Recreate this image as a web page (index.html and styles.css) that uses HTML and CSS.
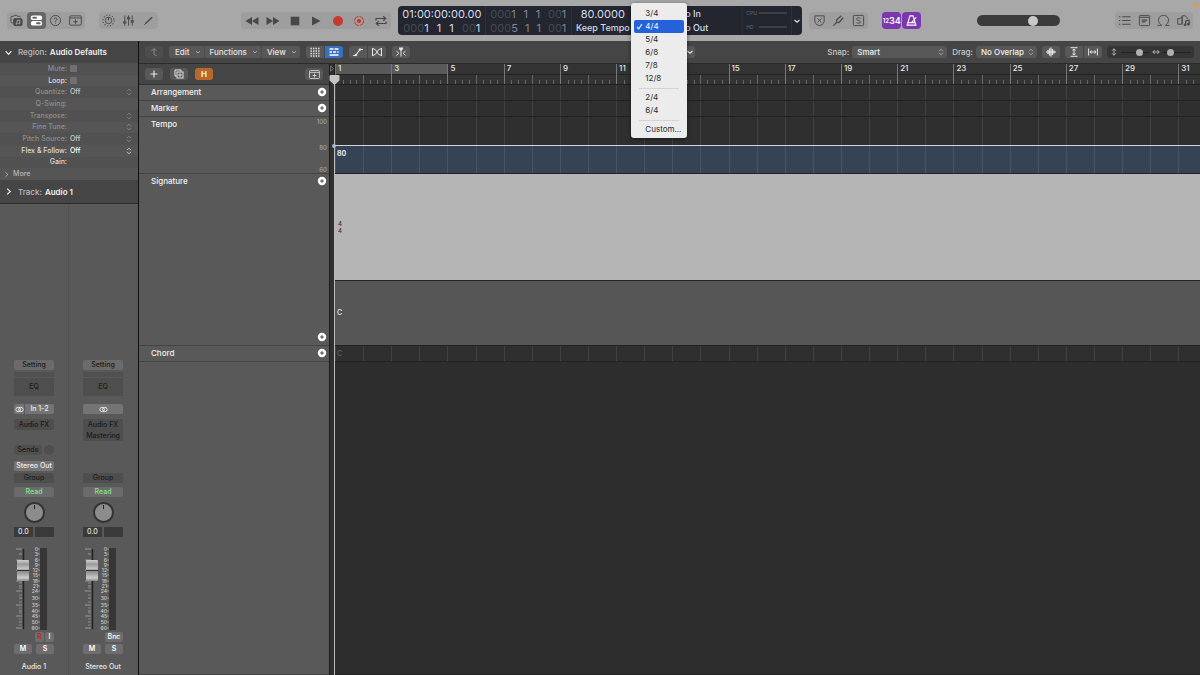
FILE: index.html
```html
<!DOCTYPE html>
<html lang="en">
<head>
    <meta charset="UTF-8">
    <meta name="viewport" content="width=device-width, initial-scale=1.0">
    <title>Tracks</title>
    <link rel="stylesheet" href="styles.css">
</head>
<body>
    <svg class="sprite" aria-hidden="true">
        <symbol id="i-library" viewBox="0 0 14 14"><path d="M3 9.500H2q-1 0-1-1V3.500q0-1 1-1h2l.7-1h2.600l.7 1h2q1 0 1 1"/><rect x="4" y="5" width="9" height="7.500" rx="1.200" fill="currentColor"/><path d="M7.500 10.500V7l3-.5v3.500" stroke="#a8a8a8"/><circle cx="7" cy="10.500" r=".6" stroke="#a8a8a8"/><circle cx="10" cy="10" r=".6" stroke="#a8a8a8"/></symbol>
        <symbol id="i-inspector" viewBox="0 0 14 14"><g stroke="none"><rect x="1" y="1.500" width="12" height="5" rx="2" fill="currentColor"/><rect x="1" y="7.500" width="12" height="5" rx="2" fill="currentColor"/><rect x="2.500" y="3" width="5" height="2" rx="1" fill="#666"/><rect x="6.500" y="9" width="5" height="2" rx="1" fill="#666"/></g></symbol>
        <symbol id="i-help" viewBox="0 0 14 14"><circle cx="7" cy="7" r="5.500"/><path d="M5.400 5.600Q5.500 4.200 7 4.200t1.600 1.400Q8.600 6.500 7 7.400v.8M7 9.200v1"/></symbol>
        <symbol id="i-addtray" viewBox="0 0 14 14"><rect x=".7" y="2" width="12.600" height="10" rx="1.200"/><path d="M1 4.300h12M7 5.800v5M4.500 8.300h5"/></symbol>
        <symbol id="i-dial" viewBox="0 0 14 14"><circle cx="7" cy="7" r="3.500"/><path d="M7 3.500V7" stroke-width="1.200"/><circle cx="7" cy="7" r="6" stroke-dasharray="1.200 1.940" stroke-width="1.200"/></symbol>
        <symbol id="i-mixer" viewBox="0 0 14 14"><path d="M3 1.500v11M7 1.500v11M11 1.500v11M1.800 8h2.400v2H1.800zM5.800 3.500h2.400v2H5.800zM9.800 7h2.400v2H9.800z"/></symbol>
        <symbol id="i-pencil" viewBox="0 0 14 14"><path d="M3.500 10.500l7.500-7" stroke-width="1.500"/><path d="M2.400 11.600l1-1"/></symbol>
        <symbol id="i-rewind" viewBox="0 0 14 14"><path d="M7 3v8L.5 7zM13.500 3v8L7 7z" fill="currentColor" stroke="none"/></symbol>
        <symbol id="i-forward" viewBox="0 0 14 14"><path d="M.5 3v8L7 7zM7 3v8l6.500-4z" fill="currentColor" stroke="none"/></symbol>
        <symbol id="i-stop" viewBox="0 0 14 14"><rect x="2.700" y="2.700" width="8.600" height="8.600" fill="currentColor" stroke="none"/></symbol>
        <symbol id="i-play" viewBox="0 0 14 14"><path d="M3 2.500v9L11.500 7z" fill="currentColor" stroke="none"/></symbol>
        <symbol id="i-record" viewBox="0 0 14 14"><circle cx="7" cy="7" r="5" fill="currentColor" stroke="none"/></symbol>
        <symbol id="i-capture" viewBox="0 0 14 14"><circle cx="7" cy="7" r="1.600" fill="currentColor"/><circle cx="7" cy="7" r="4.600" stroke-dasharray="6 1.220"/></symbol>
        <symbol id="i-cycle" viewBox="0 0 14 14"><path d="M2 6.500V4.500h9.500M9.200 2.200l2.500 2.300-2.500 2.300M12 7.500v2H2.500M4.800 7.200L2.300 9.500l2.500 2.300" stroke-width="1.200"/></symbol>
        <symbol id="i-replace" viewBox="0 0 14 14"><path d="M2 2h10v6.500Q10.500 12.500 7 12.500T2 8.500zM5 4.800L9 9M9 4.800L5 9"/></symbol>
        <symbol id="i-tuner" viewBox="0 0 14 14"><path d="M1.500 12.500l4-4M5.500 8.500Q4.200 7 5.500 5.800L10 1.800M5.500 8.500Q7 9.800 8.200 8.500L12 4" stroke-width="1.400"/></symbol>
        <symbol id="i-solo" viewBox="0 0 14 14"><rect x="1.500" y="1.500" width="11" height="11" rx="1"/><path d="M9 5Q8.700 4 7 4T5 5.500Q5 6.600 7 7t2 1.500Q9 10 7 10T5 9"/></symbol>
        <symbol id="i-metro" viewBox="0 0 14 14"><path d="M5.300 2h3.400l3 10H2.300zM3 9.300h8M7 9.300L12.200 3.500" stroke-width="1.200"/></symbol>
        <symbol id="i-list" viewBox="0 0 14 14"><path d="M4.500 3h9M4.500 7h9M4.500 11h9M1 3h1.500M1 7h1.500M1 11h1.500" stroke-width="1.200"/></symbol>
        <symbol id="i-notepad" viewBox="0 0 14 14"><rect x="1.500" y="1.500" width="11" height="11" rx="1"/><path d="M1.500 3.500h11M4 6.500h6M4 8.500h4" stroke-width="1.300"/></symbol>
        <symbol id="i-loops" viewBox="0 0 14 14"><path d="M.5 12.300h4.500Q1.500 10 1.500 6.700 2 1.500 7 1.500t5.500 5.200Q12.500 10 9 12.300h4.500"/></symbol>
        <symbol id="i-media" viewBox="0 0 14 14"><path d="M.8 11V5h2.500l1-1.500h1.200V11zM5.500 11V2h3.500l2 2v1.500"/><path d="M9.300 11.500V7.500l3.700-.8v4" stroke-width="1.300"/><circle cx="8.600" cy="11.700" r="1" fill="currentColor"/><circle cx="12.300" cy="11" r="1" fill="currentColor"/></symbol>
        <symbol id="i-up" viewBox="0 0 10 10"><path d="M5 1.500v5q0 2 2.500 2M2.500 4L5 1.500 7.500 4"/></symbol>
        <symbol id="i-down" viewBox="0 0 10 10"><path d="M2.500 4L5 6.200 7.500 4" stroke-width="1.200"/></symbol>
        <symbol id="i-right" viewBox="0 0 10 10"><path d="M3.500 1.800L7 5 3.500 8.200" stroke-width="1.300"/></symbol>
        <symbol id="i-step" viewBox="0 0 10 10"><path d="M2.500 4L5 1.500 7.500 4M2.500 6L5 8.500 7.500 6"/></symbol>
        <symbol id="i-grid" viewBox="0 0 10 10"><path d="M.5 1.500h9M.5 4h9M.5 6.500h9M.5 9h9" stroke-width="1.300" stroke-dasharray="1.400 1.130"/></symbol>
        <symbol id="i-regions" viewBox="0 0 10 10"><path d="M.5 2h4M5.500 2h4M.5 8h9" stroke-width="1.700"/><path d="M.5 5H3M4 5h3M8 5h1.500" stroke-width="1.700"/></symbol>
        <symbol id="i-auto" viewBox="0 0 10 10"><path d="M0 8.500h2.500l4.500-6h3" stroke-width="1.200"/><circle cx="3" cy="8" r=".8" fill="currentColor"/><circle cx="7" cy="2.500" r=".8" fill="currentColor"/></symbol>
        <symbol id="i-flex" viewBox="0 0 10 10"><path d="M.5 1v8M9.500 1v8M.5 1.500Q4 2 5 5t4.500 3.500M.5 8.500Q4 8 5 5t4.500-3.500"/></symbol>
        <symbol id="i-catch" viewBox="0 0 10 10"><path d="M3 .5h4v1.800L5 4 3 2.300z" fill="currentColor" stroke="none"/><path d="M5 3v6.500M.5 4l2.300 2.200L.5 8.500M9.500 4L7.200 6.200l2.300 2.300"/></symbol>
        <symbol id="i-plus" viewBox="0 0 10 10"><path d="M5 1.500v7M1.500 5h7" stroke-width="1.200"/></symbol>
        <symbol id="i-dup" viewBox="0 0 10 10"><path d="M7 2.500V1H1v6h1.500"/><rect x="3" y="3" width="6" height="6"/><path d="M6 4.300v3.400M4.300 6h3.400"/></symbol>
        <symbol id="i-wave" viewBox="0 0 10 10"><path d="M0 5h10M2 3v4M3.500 1.500v7M5 .5v9M6.500 2v6M8 3.500v3" stroke-width="1.200"/></symbol>
        <symbol id="i-vfit" viewBox="0 0 10 10"><path d="M1.500.7h7M1.500 9.300h7M5 2v6M3.300 3.500L5 2l1.700 1.500M3.300 6.500L5 8l1.700-1.500"/></symbol>
        <symbol id="i-hfit" viewBox="0 0 10 10"><path d="M.6 1.500v7M9.400 1.500v7M2 5h6M3.500 3.300L2 5l1.500 1.700M6.500 3.300L8 5 6.500 6.700"/></symbol>
        <symbol id="i-ud" viewBox="0 0 10 10"><path d="M5 1v8M2.500 3.500L5 1l2.500 2.500M2.500 6.500L5 9l2.500-2.500"/></symbol>
        <symbol id="i-lr" viewBox="0 0 10 10"><path d="M1 5h8M3.500 2.500L1 5l2.500 2.500M6.500 2.500L9 5 6.500 7.500"/></symbol>
        <symbol id="i-add" viewBox="0 0 10 10"><circle cx="5" cy="5" r="4.200" fill="#fff" stroke="none"/><path d="M5 3.200v3.600M3.200 5h3.600" stroke="#444"/></symbol>
        <symbol id="i-stereo" viewBox="0 0 10 10"><circle cx="3.500" cy="5" r="2.500"/><circle cx="6.500" cy="5" r="2.500"/></symbol>
        <symbol id="i-check" viewBox="0 0 10 10"><path d="M1.500 5.500L4 8.500l4.500-7" stroke-width="1.500"/></symbol>
    </svg>

    <header class="control-bar">
        <div class="bar-left">
            <div class="group views">
                <button aria-label="Library"><svg><use href="#i-library"/></svg></button>
                <button class="pressed" aria-label="Inspector"><svg><use href="#i-inspector"/></svg></button>
                <button aria-label="Quick Help"><svg><use href="#i-help"/></svg></button>
                <button aria-label="Toolbar"><svg><use href="#i-addtray"/></svg></button>
            </div>
            <div class="group editors">
                <button aria-label="Smart Controls"><svg><use href="#i-dial"/></svg></button>
                <button aria-label="Mixer"><svg><use href="#i-mixer"/></svg></button>
                <button aria-label="Editors"><svg><use href="#i-pencil"/></svg></button>
            </div>
        </div>
        <div class="bar-center">
            <div class="group transport">
                <button aria-label="Rewind"><svg><use href="#i-rewind"/></svg></button>
                <button aria-label="Forward"><svg><use href="#i-forward"/></svg></button>
                <button aria-label="Stop"><svg><use href="#i-stop"/></svg></button>
                <button aria-label="Play"><svg><use href="#i-play"/></svg></button>
                <button class="red" aria-label="Record"><svg><use href="#i-record"/></svg></button>
                <button class="red" aria-label="Capture"><svg><use href="#i-capture"/></svg></button>
                <button aria-label="Cycle"><svg><use href="#i-cycle"/></svg></button>
            </div>
            <div class="lcd">
                <div class="lcd-cell lcd-time">
                    <div class="big">01:00:00:00.00</div>
                    <div class="beats"><span><i>000</i>1</span><span>1</span><span>1</span><span><i>00</i>1</span></div>
                </div>
                <div class="lcd-cell lcd-locators">
                    <div class="beats"><span><i>000</i>1</span><span>1</span><span>1</span><span><i>00</i>1</span></div>
                    <div class="beats"><span><i>000</i>5</span><span>1</span><span>1</span><span><i>00</i>1</span></div>
                </div>
                <div class="lcd-cell lcd-tempo">
                    <div class="big">80.0000</div>
                    <div>Keep Tempo</div>
                </div>
                <div class="lcd-cell lcd-sig">
                    <ul class="menu" role="menu">
                        <li><button role="menuitem">3/4</button></li>
                        <li><button role="menuitem" class="selected"><svg><use href="#i-check"/></svg>4/4</button></li>
                        <li><button role="menuitem">5/4</button></li>
                        <li><button role="menuitem">6/8</button></li>
                        <li><button role="menuitem">7/8</button></li>
                        <li><button role="menuitem">12/8</button></li>
                        <li class="sep"></li>
                        <li><button role="menuitem">2/4</button></li>
                        <li><button role="menuitem">6/4</button></li>
                        <li class="sep"></li>
                        <li><button role="menuitem">Custom...</button></li>
                    </ul>
                </div>
                <div class="lcd-cell lcd-midi">
                    <div>No In</div>
                    <div>No Out</div>
                </div>
                <div class="lcd-cell lcd-load">
                    <div>CPU<span></span></div>
                    <div>HD<span></span></div>
                </div>
                <button class="lcd-more" aria-label="Display mode"><svg><use href="#i-down"/></svg></button>
            </div>
            <div class="group modes">
                <button aria-label="Replace"><svg><use href="#i-replace"/></svg></button>
                <button aria-label="Tuner"><svg><use href="#i-tuner"/></svg></button>
                <button aria-label="Solo"><svg><use href="#i-solo"/></svg></button>
            </div>
            <div class="clicks">
                <button><small>12</small>34</button>
                <button aria-label="Metronome"><svg><use href="#i-metro"/></svg></button>
            </div>
        </div>
        <input type="range" class="volume" aria-label="Master volume" value="70">
        <div class="group views">
            <button aria-label="List Editors"><svg><use href="#i-list"/></svg></button>
            <button aria-label="Note Pads"><svg><use href="#i-notepad"/></svg></button>
            <button aria-label="Loop Browser"><svg><use href="#i-loops"/></svg></button>
            <button aria-label="Media"><svg><use href="#i-media"/></svg></button>
        </div>
        <span class="mic-dot"></span>
    </header>

    <div class="workspace">
        <aside class="inspector">
            <h2 class="region-title"><svg><use href="#i-right"/></svg>Region: <b>Audio Defaults</b></h2>
            <div class="params">
                <div class="param"><label for="mute">Mute:</label><input type="checkbox" id="mute"></div>
                <div class="param on"><label for="loop">Loop:</label><input type="checkbox" id="loop"></div>
                <div class="param"><label for="quantize">Quantize:</label><select id="quantize"><option>Off</option></select><svg><use href="#i-step"/></svg></div>
                <div class="param"><label>Q-Swing:</label></div>
                <div class="param"><label for="transpose">Transpose:</label><select id="transpose"><option></option></select><svg><use href="#i-step"/></svg></div>
                <div class="param"><label for="fine">Fine Tune:</label><select id="fine"><option></option></select><svg><use href="#i-step"/></svg></div>
                <div class="param"><label for="pitch">Pitch Source:</label><select id="pitch"><option>Off</option></select><svg><use href="#i-step"/></svg></div>
                <div class="param on"><label for="flex">Flex &amp; Follow:</label><select id="flex"><option>Off</option></select><svg><use href="#i-step"/></svg></div>
                <div class="param on"><label>Gain:</label></div>
                <button class="param more"><svg><use href="#i-right"/></svg>More</button>
            </div>
            <h2 class="track-title"><svg><use href="#i-right"/></svg>Track: <b>Audio 1</b></h2>
            <div class="strips">
                <section class="strip">
                    <button class="slot light">Setting</button>
                    <div class="eq"><span></span><button>EQ</button></div>
                    <div class="slot bright split"><button aria-label="Stereo"><svg><use href="#i-stereo"/></svg></button><button>In 1-2</button></div>
                    <div class="fx"><button>Audio FX</button></div>
                    <div class="sends"><button>Sends</button><span></span></div>
                    <button class="slot bright">Stereo Out</button>
                    <button class="slot dark">Group</button>
                    <button class="slot light read">Read</button>
                    <div class="knob"></div>
                    <div class="values"><span>0.0</span><span></span></div>
                    <div class="fader"><input type="range" aria-label="Audio 1 volume" value="80"></div>
                    <div class="arm"><button class="rec">R</button><button>I</button></div>
                    <div class="ms"><button>M</button><button>S</button></div>
                    <div class="name">Audio 1</div>
                </section>
                <section class="strip">
                    <button class="slot light">Setting</button>
                    <div class="eq"><span></span><button>EQ</button></div>
                    <button class="slot bright" aria-label="Stereo"><svg><use href="#i-stereo"/></svg></button>
                    <div class="fx"><button>Audio FX</button><button>Mastering</button></div>
                    <div></div>
                    <div></div>
                    <button class="slot dark">Group</button>
                    <button class="slot light read">Read</button>
                    <div class="knob"></div>
                    <div class="values"><span>0.0</span><span></span></div>
                    <div class="fader"><input type="range" aria-label="Stereo Out volume" value="80"></div>
                    <div class="arm"><button>Bnc</button></div>
                    <div class="ms"><button>M</button><button>S</button></div>
                    <div class="name">Stereo Out</div>
                </section>
            </div>
        </aside>

        <main class="tracks">
            <div class="menu-bar">
                <button class="btn dim" aria-label="Up"><svg><use href="#i-up"/></svg></button>
                <div class="btns text">
                    <button>Edit<svg><use href="#i-down"/></svg></button>
                    <button>Functions<svg><use href="#i-down"/></svg></button>
                    <button>View<svg><use href="#i-down"/></svg></button>
                </div>
                <div class="btns">
                    <button aria-label="Grid"><svg><use href="#i-grid"/></svg></button>
                    <button class="blue" aria-label="Regions"><svg><use href="#i-regions"/></svg></button>
                </div>
                <div class="btns">
                    <button aria-label="Automation"><svg><use href="#i-auto"/></svg></button>
                    <button aria-label="Flex"><svg><use href="#i-flex"/></svg></button>
                </div>
                <button class="btn" aria-label="Catch"><svg><use href="#i-catch"/></svg></button>
                <button class="btn tool" aria-label="Tool"><svg><use href="#i-down"/></svg></button>
                <div class="snap">
                    <label for="snap">Snap:</label>
                    <div class="pick"><select id="snap"><option>Smart</option></select><svg><use href="#i-step"/></svg></div>
                    <label for="drag">Drag:</label>
                    <div class="pick short"><select id="drag"><option>No Overlap</option></select><svg><use href="#i-step"/></svg></div>
                    <button class="btn" aria-label="Waveform zoom"><svg><use href="#i-wave"/></svg></button>
                    <div class="btns">
                        <button aria-label="Fit vertically"><svg><use href="#i-vfit"/></svg></button>
                        <button aria-label="Fit horizontally"><svg><use href="#i-hfit"/></svg></button>
                    </div>
                    <div class="zooms">
                        <svg><use href="#i-ud"/></svg><input type="range" aria-label="Vertical zoom" value="70">
                        <svg><use href="#i-lr"/></svg><input type="range" aria-label="Horizontal zoom" value="18">
                    </div>
                </div>
            </div>

            <div class="arrange">
                <div class="row ruler-row">
                    <div class="head tools">
                        <button class="btn" aria-label="Add track"><svg><use href="#i-plus"/></svg></button>
                        <button class="btn" aria-label="Duplicate track"><svg><use href="#i-dup"/></svg></button>
                        <button class="btn orange">H</button>
                        <button class="btn last" aria-label="Global tracks"><svg><use href="#i-addtray"/></svg></button>
                    </div>
                    <div class="gutter"><svg viewBox="0 0 5 10"><path d="M.5 1.500L4 5 .5 8.500z"/></svg></div>
                    <div class="ruler" id="ruler"></div>
                </div>
                <div class="row">
                    <div class="head">Arrangement<button class="add" aria-label="Add arrangement"><svg><use href="#i-add"/></svg></button></div>
                    <div class="gutter"></div>
                    <div class="lane grid"></div>
                </div>
                <div class="row">
                    <div class="head">Marker<button class="add" aria-label="Add marker"><svg><use href="#i-add"/></svg></button></div>
                    <div class="gutter"></div>
                    <div class="lane grid"></div>
                </div>
                <div class="row tempo">
                    <div class="head">Tempo<div class="scale"><span>100</span><span>80</span><span>60</span></div></div>
                    <div class="gutter"></div>
                    <div class="lane grid"><div class="tempo-region">80</div></div>
                </div>
                <div class="row signature">
                    <div class="head">Signature
                        <div class="adds">
                            <button class="add" aria-label="Add time signature"><svg><use href="#i-add"/></svg></button>
                            <button class="add" aria-label="Add key signature"><svg><use href="#i-add"/></svg></button>
                        </div>
                    </div>
                    <div class="gutter"></div>
                    <div class="lane">
                        <div class="time-sig"><span>4</span><span>4</span></div>
                        <div class="key-sig">C</div>
                    </div>
                </div>
                <div class="row">
                    <div class="head">Chord<button class="add" aria-label="Add chord"><svg><use href="#i-add"/></svg></button></div>
                    <div class="gutter"></div>
                    <div class="lane grid"><span class="chord">C</span></div>
                </div>
                <div class="row rest">
                    <div class="head"></div>
                    <div class="gutter"></div>
                    <div class="lane"></div>
                </div>
                <div class="playhead"><svg viewBox="0 0 10 10"><path d="M0 1q0-1 1-1h8q1 0 1 1v4.500L5 10 0 5.500z" fill="#c4c4c4" stroke="none"/></svg><span class="node"></span></div>
            </div>
        </main>
    </div>

    <script>
        const BARS = 31;

        // Ruler: one cell per bar, number on the odd ones
        const ruler = document.getElementById('ruler');
        for (let bar = 1; bar <= BARS; bar++) {
            const cell = document.createElement('div');
            cell.className = 'bar' + (bar % 2 ? ' odd' : '') + (bar < 5 ? ' cycle' : '');
            cell.innerHTML = `
                <div class="num">${bar % 2 ? bar : ''}</div>
                <div class="ticks"><i></i><i></i><i></i><i></i></div>
            `;
            ruler.appendChild(cell);
        }

        // Bar lines behind the global tracks
        document.querySelectorAll('.lane.grid').forEach(lane => {
            const lines = document.createElement('div');
            lines.className = 'lines';
            lines.innerHTML = '<i></i>'.repeat(BARS);
            lane.appendChild(lines);
        });

        // Fader scale and level meter
        const marks = [[0, 2], [3, 7], [6, 13], [9, 18], [12, 23], [15, 28], [18, 34], [21, 39],
            [24, 44], [30, 51], [35, 58], [40, 64], [45, 69], [50, 75], [60, 81]];
        document.querySelectorAll('.fader').forEach(fader => {
            let svg = '<svg viewBox="0 0 40 84"><path d="M9.500 2v80" stroke="#222" stroke-width="1.500"/>';
            marks.forEach(([db, y], i) => {
                svg += `<path d="M${i % 2 ? 5 : 2} ${y}h${i % 2 ? 3 : 6}M24 ${y}h2" stroke="#999"/>`;
                if (i > 6) svg += `<path d="M5 ${y - 3}h3" stroke="#888"/>`;
                svg += `<text x="24" y="${y + 1.5}" text-anchor="end">${db}</text>`;
            });
            svg += '<rect x="26" y="1" width="7" height="82" fill="#363636" stroke="none"/></svg>';
            fader.insertAdjacentHTML('afterbegin', svg);
        });
    </script>
</body>
</html>
```
FILE: styles.css
```css
* {
    box-sizing: border-box;
}
body {
    margin: 0;
    height: 100vh;
    display: flex;
    flex-direction: column;
    overflow: hidden;
    background: #2d2d2d;
    color: #e6e6e6;
    font: 500 8px/12px Inter, "Liberation Sans", sans-serif;
}
button, select, input {
    font: inherit;
    color: inherit;
    margin: 0;
    padding: 0;
    border: 0;
    background: none;
    appearance: none;
    outline: none;
}
button {
    display: flex;
    align-items: center;
    justify-content: center;
    white-space: nowrap;
}
svg {
    width: 10px;
    height: 10px;
    fill: none;
    stroke: currentColor;
    flex: none;
}
.sprite {
    display: none;
}
i {
    font-style: normal;
}

/* Control bar */
.control-bar {
    position: relative;
    height: 41px;
    flex: none;
    padding: 0 7px;
    display: flex;
    align-items: center;
    justify-content: space-between;
    background: #a8a8a8;
    color: #484848;
}
.bar-left {
    display: flex;
    gap: 14px;
}
.bar-center {
    display: flex;
    align-items: center;
    gap: 7px;
    margin-left: 28px;
}
.group {
    display: flex;
    height: 17px;
    border-radius: 4px;
    background: #9e9e9e;
}
.group button {
    flex: 1;
    border-radius: 4px;
}
.group svg, .clicks svg {
    width: 13px;
    height: 13px;
}
.views {
    width: 78px;
}
.editors, .modes {
    width: 59px;
}
.transport {
    width: 150px;
}
.transport svg {
    width: 14px;
    height: 14px;
}
.group .pressed {
    background: #666;
    color: #fff;
}
.red {
    color: #c53a2f;
}
.clicks {
    display: flex;
    gap: 1px;
    margin-left: 7px;
}
.clicks button {
    width: 19px;
    height: 17px;
    border-radius: 4px;
    background: #7b37ad;
    color: #fff;
    font-size: 9px;
    font-weight: 600;
}
.clicks small {
    font-size: 6px;
}
.volume {
    width: 83px;
    height: 11px;
    border-radius: 6px;
    background: #3b3b3b;
}
.volume::-webkit-slider-thumb {
    appearance: none;
    width: 10px;
    height: 10px;
    border-radius: 50%;
    background: #c9c9c9;
}
.mic-dot {
    position: absolute;
    right: 3px;
    top: 3px;
    width: 4px;
    height: 4px;
    border-radius: 50%;
    background: #e79a3a;
}

/* LCD */
.lcd {
    position: relative;
    display: flex;
    width: 404px;
    height: 29px;
    border-radius: 4px;
    background: #23252f;
    color: #d3dcec;
    font-size: 9px;
    line-height: 14px;
}
.lcd-cell {
    display: flex;
    flex-direction: column;
    flex: none;
    border-right: 1px solid #2d303a;
    white-space: nowrap;
}
.big, .beats {
    font-size: 11px;
    font-weight: 400;
}
.beats {
    display: flex;
    justify-content: space-between;
}
.beats i {
    color: #454954;
}
.lcd-time {
    width: 88px;
    padding: 1px 5px 0 4px;
}
.lcd-time .beats {
    padding-left: 1px;
}
.lcd-locators {
    width: 86px;
    padding: 1px 5px 0 4px;
}
.lcd-locators .beats {
    color: #818694;
}
.lcd-tempo {
    width: 61px;
    padding-top: 1px;
    align-items: center;
    border: 0;
}
.lcd-sig {
    width: 42px;
    border: 0;
}
.lcd-midi {
    width: 68px;
    padding: 1px 0 0 3px;
}
.lcd-load {
    width: 49px;
    padding: 0 4px 0 3px;
    color: #5a5e6a;
    font-size: 5px;
}
.lcd-load div {
    display: flex;
    align-items: center;
    justify-content: space-between;
}
.lcd-load span {
    width: 28px;
    height: 2px;
    background: #3a3d48;
}
.lcd-more {
    flex: 1;
}
.menu {
    position: absolute;
    z-index: 5;
    left: 233px;
    top: -3px;
    width: 56px;
    margin: 0;
    padding: 4px 3px 2px;
    list-style: none;
    border-radius: 3px;
    background: #ececec;
    box-shadow: 0 1px 4px rgba(0, 0, 0, .5);
    color: #2b2b2b;
    font-size: 8px;
    font-weight: 400;
    line-height: 13px;
}
.menu button {
    position: relative;
    width: 100%;
    height: 13px;
    padding-left: 11px;
    justify-content: flex-start;
    border-radius: 2px;
}
.menu svg {
    position: absolute;
    left: 2px;
    width: 7px;
    height: 7px;
}
.menu .selected {
    background: #2561d9;
    color: #fff;
}
.menu .sep {
    height: 6px;
    margin: 0 5px;
    background: linear-gradient(#d4d4d4, #d4d4d4) center / 100% 1px no-repeat;
}

/* Inspector */
.workspace {
    flex: 1;
    display: flex;
    min-height: 0;
}
.inspector {
    width: 139px;
    flex: none;
    display: flex;
    flex-direction: column;
    border-right: 1px solid #111;
    background: #595959;
}
.inspector h2 {
    display: flex;
    align-items: center;
    gap: 3px;
    height: 22px;
    margin: 0;
    padding-left: 4px;
    background: #454545;
    color: #bdbdbd;
    font-size: 8px;
    font-weight: 500;
    flex: none;
}
.inspector h2 b {
    color: #f2f2f2;
    font-weight: 600;
}
.inspector h2 svg {
    width: 9px;
    height: 9px;
    margin-right: 2px;
    color: #eee;
}
.region-title svg {
    transform: rotate(90deg);
}
.inspector .track-title {
    height: 24px;
    border-bottom: 1px solid #2c2c2c;
}
.params {
    display: flex;
    flex-direction: column;
    height: 117px;
    font-size: 7px;
    line-height: 10px;
}
.param {
    flex: 1;
    min-height: 0;
    display: flex;
    align-items: center;
    gap: 3px;
    padding-right: 5px;
    background: #515151;
    color: #8e8e8e;
}
.param:nth-child(even) {
    background: #555;
}
.param label {
    width: 67px;
    text-align: right;
}
.param.on {
    color: #ddd;
}
.param select {
    flex: 1;
    height: 10px;
    color: #ccc;
}
.param.on select {
    color: #fff;
}
.param input {
    width: 7px;
    height: 7px;
    border-radius: 1px;
    background: #707070;
}
.param svg {
    width: 8px;
    height: 8px;
}
.more {
    justify-content: flex-start;
    padding-left: 3px;
    color: #b5b5b5;
}
.more svg {
    width: 7px;
    height: 7px;
}

/* Channel strips */
.strips {
    flex: 1;
    display: flex;
    align-items: stretch;
}
.strip {
    width: 69px;
    padding: 0 14px;
    display: grid;
    align-content: end;
    align-items: start;
    grid-template-columns: 40px;
    grid-template-rows: 12px 32px 15px 26px 16px 12px 14px 15px 25px 20px 85px 12px 16px 15px;
    font-size: 7px;
    line-height: 10px;
}
.strip:first-child {
    border-right: 1px solid #505050;
}
.slot, .fx, .values, .ms, .arm {
    height: 10px;
}
.slot {
    width: 100%;
    border-radius: 2px;
}
.light, .bright {
    background: #6b6b6b;
    color: #1c1c1c;
}
.bright {
    background: #747474;
    color: #eee;
}
.slot.dark {
    background: #4e4e4e;
    color: #1c1c1c;
}
.slot.read {
    color: #8ae08e;
}
.slot svg {
    width: 9px;
    height: 9px;
}
.split {
    display: flex;
}
.split button:first-child {
    width: 11px;
    border-right: 1px solid #5b5b5b;
}
.split button:last-child {
    flex: 1;
}
.eq {
    width: 100%;
    color: #1c1c1c;
}
.eq span {
    display: block;
    height: 5px;
    margin-bottom: 1px;
    background: #505050;
}
.eq button {
    width: 100%;
    height: 18px;
    background: #4e4e4e;
}
.fx {
    height: auto;
    border-radius: 2px;
    background: #4e4e4e;
    color: #1a1a1a;
}
.fx button {
    width: 100%;
    height: 11px;
}
.sends {
    display: flex;
    justify-content: space-between;
    color: #1a1a1a;
}
.sends button, .sends span {
    height: 10px;
    border-radius: 3px;
    background: #505050;
}
.sends button {
    width: 28px;
}
.sends span {
    width: 10px;
    border-radius: 50%;
    background: #4e4e4e;
}
.knob {
    justify-self: center;
    width: 21px;
    height: 21px;
    border: 2px solid #333;
    border-radius: 50%;
    background: linear-gradient(#222, #222) center 1px / 1px 4px no-repeat, #8c8c8c;
}
.values {
    display: flex;
    gap: 2px;
    text-align: center;
}
.values span {
    flex: 1;
    height: 10px;
    background: #3a3a3a;
}
.fader {
    position: relative;
    height: 84px;
}
.fader svg {
    display: block;
    width: 40px;
    height: 84px;
}
.fader text {
    font-size: 5px;
    fill: #ccc;
    stroke: none;
}
.fader input {
    position: absolute;
    left: 3px;
    top: 1px;
    width: 12px;
    height: 82px;
    writing-mode: vertical-lr;
    direction: rtl;
}
.fader input::-webkit-slider-thumb {
    appearance: none;
    width: 12px;
    height: 21px;
    border-radius: 1px;
    background: linear-gradient(#d0d0d0, #999 20%, #ccc 45%, #333 46%, #333 52%, #888 53%, #ccc 85%, #888);
}
.arm {
    display: flex;
    justify-content: flex-end;
    gap: 1px;
}
.arm button, .ms button {
    height: 10px;
    min-width: 9px;
    border-radius: 2px;
    background: #6e6e6e;
    color: #fff;
}
.arm button:only-child {
    width: 18px;
}
.arm .rec {
    color: #c0251c;
}
.ms {
    display: flex;
    justify-content: space-between;
}
.ms button {
    width: 18px;
    font-weight: 600;
}
.name {
    text-align: center;
    line-height: 14px;
    white-space: nowrap;
}

/* Tracks area */
.tracks {
    flex: 1;
    min-width: 0;
    display: flex;
    flex-direction: column;
}
.menu-bar {
    height: 22px;
    flex: none;
    display: flex;
    align-items: center;
    gap: 6px;
    padding: 0 6px;
    background: #454545;
}
.btn, .btns button {
    min-width: 18px;
    height: 12px;
    border-radius: 3px;
    background: #585858;
    color: #e4e4e4;
}
.btn.dim {
    background: #4d4d4d;
    color: #888;
}
.btns {
    display: flex;
    gap: 1px;
}
.btns button {
    border-radius: 0;
}
.btns button:first-child {
    border-radius: 3px 0 0 3px;
}
.btns button:last-child {
    border-radius: 0 3px 3px 0;
}
.btns.text {
    gap: 0;
}
.btns.text button {
    gap: 4px;
    padding: 0 2px 0 6px;
}
.btns.text button + button {
    border-left: 1px solid #4c4c4c;
    padding-left: 5px;
}
.btns.text svg {
    width: 8px;
    height: 8px;
    color: #aaa;
}
.btns .blue {
    background: #3a6fc0;
    color: #fff;
}
.tool {
    width: 48px;
    margin-left: 22%;
    justify-content: flex-end;
}
.snap {
    display: flex;
    align-items: center;
    gap: 5px;
    margin-left: auto;
    color: #c9c9c9;
}
.snap label {
    margin-right: -2px;
}
.pick {
    position: relative;
    width: 95px;
    height: 12px;
    display: flex;
    align-items: center;
    border-radius: 3px;
    background: #585858;
    color: #efefef;
}
.pick.short {
    width: 61px;
}
.pick select {
    width: 100%;
    height: 12px;
    padding-left: 5px;
}
.pick svg {
    position: absolute;
    right: 2px;
    width: 8px;
    height: 8px;
    color: #bbb;
    pointer-events: none;
}
.zooms {
    display: flex;
    align-items: center;
    gap: 3px;
    width: 87px;
    height: 12px;
    padding: 0 3px;
    border-radius: 3px;
    background: #353535;
}
.zooms svg {
    width: 8px;
    height: 8px;
}
.zooms input {
    flex: 1;
    min-width: 0;
    height: 8px;
    background: linear-gradient(#222, #222) center / 100% 1px no-repeat;
}
.zooms input::-webkit-slider-thumb {
    appearance: none;
    width: 7px;
    height: 7px;
    border-radius: 50%;
    background: #b0b0b0;
}

.arrange {
    position: relative;
    flex: 1;
    display: flex;
    flex-direction: column;
}
.row {
    display: flex;
    height: 16px;
    flex: none;
}
.head {
    width: 190px;
    display: flex;
    justify-content: space-between;
    padding: 1px 2px 0 12px;
    border-bottom: 1px solid #444;
    background: #595959;
    color: #f2f2f2;
}
.gutter {
    width: 6px;
    background: #303030;
    border: solid #1c1c1c;
    border-width: 0 1px;
}
.gutter svg {
    display: block;
    width: 4px;
    height: 9px;
    color: #888;
}
.lane {
    position: relative;
    flex: 1;
    min-width: 0;
    border-bottom: 1px solid #222;
    background: #2f2f2f;
}
.add {
    height: 12px;
}
.ruler-row {
    height: 22px;
    border-top: 1px solid #2b2b2b;
}
.tools {
    align-items: center;
    justify-content: flex-start;
    gap: 7px;
    padding: 0 6px;
    background: #454545;
    border-color: #333;
}
.tools .last {
    margin-left: auto;
}
.last svg {
    width: 11px;
    height: 11px;
}
.btn.orange {
    background: #b8692a;
    color: #fff;
    font-weight: 600;
}
.ruler, .lines {
    display: grid;
    grid-template-columns: repeat(31, 3.25%);
    overflow: hidden;
}
.ruler {
    flex: 1;
    min-width: 0;
    background: #333;
    border-bottom: 1px solid #1f1f1f;
}
.bar {
    position: relative;
    height: 21px;
}
.bar.odd {
    border-left: 1px solid #777;
}
.num {
    height: 11px;
    padding-left: 2px;
    line-height: 8px;
    border-bottom: 1px solid #242424;
}
.cycle .num {
    background: #595959;
}
.ticks {
    display: grid;
    grid-template-columns: repeat(4, 1fr);
    align-items: end;
    height: 10px;
}
.ticks i {
    height: 5px;
    border-left: 1px solid #666;
}
.ticks i:first-child {
    height: 10px;
}
.odd .ticks i:first-child {
    border: 0;
}
.lines {
    position: absolute;
    inset: 0;
}
.lines i {
    border-left: 1px solid rgba(255, 255, 255, .09);
}
.tempo {
    height: 57px;
}
.scale {
    display: flex;
    flex-direction: column;
    text-align: right;
    color: #a5a5a5;
    font-size: 6px;
    line-height: 8px;
}
.scale span:nth-child(2) {
    margin: 18px 0 14px;
}
.lane .tempo-region {
    height: 28px;
    margin-top: 28px;
    padding-left: 2px;
    line-height: 15px;
    font-size: 7px;
    font-weight: 700;
    background: #364355;
    border-top: 1px solid #d0d5dc;
}
.signature {
    height: 172px;
}
.adds {
    display: flex;
    flex-direction: column;
    justify-content: space-between;
    padding-bottom: 2px;
}
.signature .lane {
    display: flex;
    flex-direction: column;
}
.time-sig {
    height: 107px;
    display: flex;
    flex-direction: column;
    justify-content: center;
    padding-left: 3px;
    border-bottom: 1px solid #222;
    background: #b5b5b5;
    color: #333;
    font-size: 6px;
    line-height: 7px;
}
.key-sig {
    flex: 1;
    display: flex;
    align-items: center;
    padding-left: 2px;
    background: #565656;
    font-size: 7px;
}
.chord {
    padding-left: 2px;
    color: #606060;
    font-size: 7px;
    line-height: 15px;
}
.rest {
    flex: 1;
}
.rest .lane {
    background: #2d2d2d;
}
.playhead {
    position: absolute;
    left: 195px;
    top: 12px;
    bottom: 0;
    width: 1px;
    background: #bbb;
}
.playhead svg {
    position: absolute;
    left: -5px;
    top: 0;
    width: 11px;
}
.node {
    position: absolute;
    left: -2px;
    top: 69px;
    width: 4px;
    height: 4px;
    border-radius: 50%;
    background: #a9b8cc;
}
```
